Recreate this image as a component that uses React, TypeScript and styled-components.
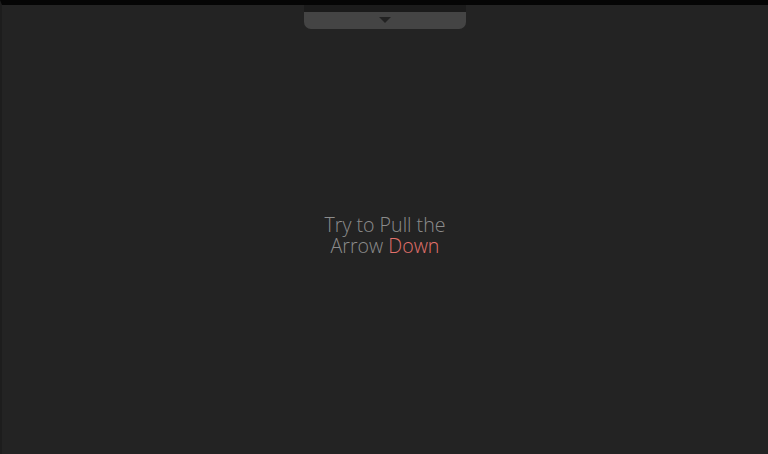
import React from "react";
import styled, { createGlobalStyle } from "styled-components";

const Global = createGlobalStyle`
  html, body { margin: 0; padding: 0; background: #222222; }
  #root { height: 100vh; }
`;

const Page = styled.div`
  height: 454px;
  width: 768px;
  box-sizing: border-box;
  background: #232323;
  border-top: 5px solid #050505;
  border-left: 2px solid #1d1d1d;
  display: flex;
  flex-direction: column;
  align-items: center;
  font-family: "Open Sans", sans-serif;
`;

const Pull = styled.div`
  width: 162px;
  display: flex;
  flex-direction: column;
  border-radius: 0 0 7px 7px;
  overflow: hidden;
`;

const PullTop = styled.div`
  height: 7px;
  background: #1b1b1b;
`;

const PullHandle = styled.div`
  height: 17px;
  background: #444444;
  display: flex;
  justify-content: center;
  align-items: flex-start;
  padding-top: 5px;
  box-sizing: border-box;
`;

const Arrow = styled.div`
  width: 0;
  height: 0;
  border-left: 6px solid transparent;
  border-right: 6px solid transparent;
  border-top: 6px solid #222222;
`;

const Center = styled.div`
  flex: 1;
  display: flex;
  align-items: center;
  justify-content: center;
  padding-bottom: 14px;
`;

const Message = styled.p`
  margin: 0;
  text-align: center;
  color: #8c8c8c;
  font-size: 19.6px;
  font-weight: 300;
  line-height: 21px;
`;

const Accent = styled.span`
  color: #e2716b;
`;

export default function App() {
  return (
    <>
      <Global />
      <Page>
        <Pull>
          <PullTop />
          <PullHandle>
            <Arrow />
          </PullHandle>
        </Pull>
        <Center>
          <Message>
            Try to Pull the
            <br />
            Arrow <Accent>Down</Accent>
          </Message>
        </Center>
      </Page>
    </>
  );
}
